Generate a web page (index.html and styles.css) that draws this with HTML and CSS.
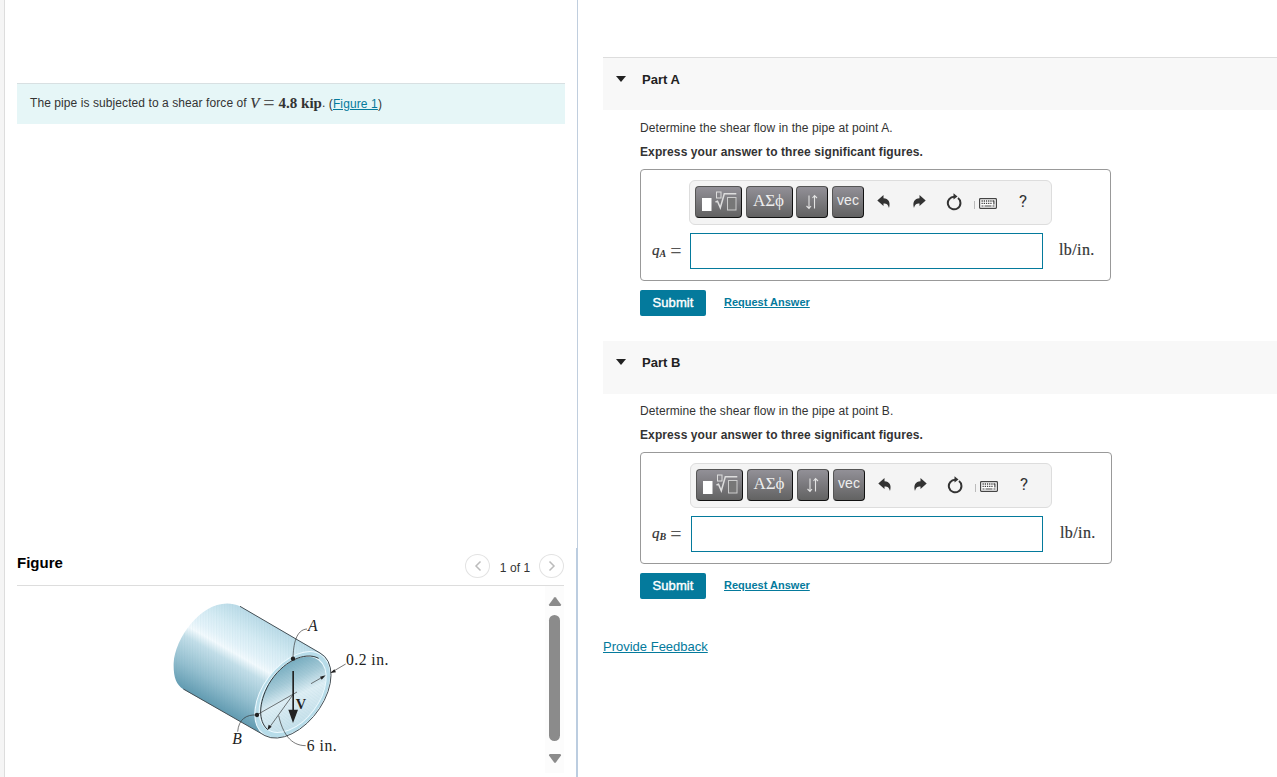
FILE: index.html
```
<!DOCTYPE html>
<html lang="en">
<head>
  <meta charset="UTF-8" />
  <meta name="viewport" content="width=device-width, initial-scale=1" />
  <title>Shear Flow in a Pipe</title>
  <link rel="stylesheet" href="styles.css">
</head>
<body>

  <!-- shared icons -->
  <svg class="defs" width="0" height="0">
    <symbol id="root" viewBox="0 0 36 22">
      <rect x="1" y="7" width="9.500" height="13" fill="#fff" />
      <rect x="15.500" y="1" width="4.500" height="6" fill="none" stroke="#ddd" />
      <path d="M14.500 11l2-.8 2.800 6.500 4-14h12" fill="none" stroke="#ddd" stroke-width="1.500" />
      <rect x="26.500" y="6.500" width="8.500" height="12.500" fill="#777" stroke="#ccc" />
    </symbol>
    <symbol id="updown" viewBox="0 0 14 16">
      <path d="M4 1.500v13M1.500 12L4 14.500 6 12M9.500 14.500v-13M7.500 4l2-2.500L12 4" fill="none" stroke="#e4e4e4" stroke-width="1.100" />
    </symbol>
    <symbol id="undo" viewBox="0 0 14 14">
      <path d="M6.500 0v3.300c5 .2 7.300 4 5.500 9.700-.8-3.400-2-4.600-5.500-4.600V11L.3 5.500z" fill="#333" />
    </symbol>
    <symbol id="reset" viewBox="0 0 16 18">
      <path d="M12 5A6.300 6.300 0 1 1 8.500 3.700" fill="none" stroke="#333" stroke-width="2" />
      <path d="M7.500 .3L11.500 3.600 7.500 6.500z" fill="#333" />
    </symbol>
    <symbol id="keyboard" viewBox="0 0 18 11">
      <rect x=".6" y=".6" width="16.800" height="9.800" rx=".8" fill="#fff" stroke="#444" stroke-width="1.200" />
      <path d="M2.500 3h13M2.500 5.400h11" stroke="#444" stroke-width="1.300" stroke-dasharray="1.300 .9" />
      <path d="M2.500 8h2M5.500 8h7M13.500 8h2M14.900 2.500v4" stroke="#444" stroke-width="1.200" />
    </symbol>
  </svg>

  <div class="page">
    <div class="left-panel">
      <div class="problem">
        The pipe is subjected to a shear force of <span class="math"><i>V</i><span class="eq">=</span><b>4.8 kip</b></span>. <span class="ref">(<a href="#figure">Figure 1</a>)</span>
      </div>

      <div class="figure-head" id="figure">
        <h2>Figure</h2>
        <div class="pager">
          <button class="round"><svg width="8" height="12" viewBox="0 0 8 12"><path d="M6.500 1.500L2 6l4.500 4.500" /></svg></button>
          <span>1 of 1</span>
          <button class="round"><svg width="8" height="12" viewBox="0 0 8 12"><path d="M1.500 1.500L6 6l-4.500 4.500" /></svg></button>
        </div>
      </div>

      <div class="figure-body">
        <svg class="pipe" width="240" height="170" viewBox="0 0 720 510">
          <defs>
            <linearGradient id="outer" gradientUnits="userSpaceOnUse" x1="238" y1="37" x2="92" y2="292">
              <stop offset="0" stop-color="#bcdce8" />
              <stop offset=".2" stop-color="#d6ecf4" />
              <stop offset=".35" stop-color="#e6f4fa" />
              <stop offset=".43" stop-color="#f4fbfe" />
              <stop offset=".53" stop-color="#c4dfe9" />
              <stop offset=".78" stop-color="#94bfcf" />
              <stop offset="1" stop-color="#639cb2" />
            </linearGradient>
            <linearGradient id="inner" gradientUnits="userSpaceOnUse" x1="470" y1="200" x2="370" y2="390">
              <stop offset="0" stop-color="#5f9db3" />
              <stop offset=".38" stop-color="#a5cad7" />
              <stop offset=".6" stop-color="#dfeff5" />
              <stop offset="1" stop-color="#c5e0ea" />
            </linearGradient>
            <pattern id="lines" width="8" height="8" patternUnits="userSpaceOnUse">
              <path d="M2 0v8" stroke="#4c8da6" stroke-width="2" opacity=".1" />
            </pattern>
          </defs>
          <path d="M240 34L480 173A148 90 -53 0 1 314 421L70 283C48 268 40 246 41 205C46 118 146 -8 240 34Z" fill="url(#outer)" />
          <path d="M240 34L480 173A148 90 -53 0 1 314 421L70 283C48 268 40 246 41 205C46 118 146 -8 240 34Z" fill="url(#lines)" />
          <ellipse cx="398" cy="299" rx="147" ry="89" transform="rotate(-53 398 299)" fill="#b7dce9" stroke="#eefaff" stroke-width="3" />
          <path d="M240 34L480 174A148 90 -53 0 1 315 422L70 282" fill="none" stroke="#454f55" stroke-width="3" />
          <ellipse cx="398" cy="298" rx="130" ry="79" transform="rotate(-53 398 298)" fill="url(#inner)" stroke="#eefaff" stroke-width="3" />
          <ellipse cx="398" cy="298" rx="130" ry="79" transform="rotate(-53 398 298)" fill="url(#lines)" />
          <path d="M323 404C294 378 295 326 326 268C366 199 435 168 476 190" fill="none" stroke="#30383c" stroke-width="3" />
          <g fill="none" stroke="#333" stroke-width="2">
            <path d="M441 102C408 104 400 148 399 190" />
            <path d="M233 410C236 372 260 358 290 360" />
            <path d="M290 360L411 291M399 299L325 402" />
            <path d="M356 362C368 415 392 452 437 452" />
            <path d="M453 266L490 245M513 233L557 207" />
          </g>
          <g fill="#222">
            <path d="M497 241L485 254 480 245zM511 234L523 223 528 232zM322 406L326 389 335 395z" />
            <circle cx="399" cy="191" r="6.500" />
            <circle cx="291" cy="360" r="6.500" />
            <path d="M397 228h5v116h12L399 384 385 344h12z" />
          </g>
          <g class="pipe-text">
            <text x="444" y="108" class="it">A</text>
            <text x="217" y="446" class="it">B</text>
            <text x="407" y="341" class="bd">V</text>
            <text x="558" y="211" textLength="127">0.2 in.</text>
            <text x="440" y="467" textLength="90">6 in.</text>
          </g>
        </svg>
        <div class="scrollbar">
          <svg width="14" height="11" viewBox="0 0 14 11"><path d="M6.200 1.500Q7 .6 7.800 1.500L13 8.500Q13.300 10 12 10H2Q.7 10 1 8.500z" /></svg>
          <div class="thumb"></div>
          <svg width="14" height="11" viewBox="0 0 14 11"><path d="M6.200 9.500Q7 10.400 7.800 9.500L13 2.500Q13.300 1 12 1H2Q.7 1 1 2.500z" /></svg>
        </div>
      </div>
    </div>

    <div class="divider"></div>

    <div class="right-panel">
      <section class="part part-a">
        <div class="part-head"><span class="caret"></span><h3>Part A</h3></div>
        <div class="part-body">
          <p>Determine the shear flow in the pipe at point A.</p>
          <p class="strong">Express your answer to three significant figures.</p>
          <div class="answer">
            <label class="math"><i>q</i><sub>A</sub><span class="eq">=</span></label>
            <div class="entry">
              <div class="toolbar">
                <button class="key wide"><svg width="36" height="22"><use href="#root" /></svg></button>
                <button class="key wide greek">ΑΣϕ</button>
                <button class="key"><svg width="14" height="16"><use href="#updown" /></svg></button>
                <button class="key vec">vec</button>
                <svg class="undo" width="14" height="14"><use href="#undo" /></svg>
                <svg class="redo" width="14" height="14"><use href="#undo" /></svg>
                <svg class="reset" width="16" height="18"><use href="#reset" /></svg>
                <span class="bar"></span>
                <svg class="keyboard" width="18" height="11"><use href="#keyboard" /></svg>
                <span class="help">?</span>
              </div>
              <input type="text">
            </div>
            <span class="math unit">lb/in.</span>
          </div>
          <div class="actions"><button class="submit">Submit</button><a href="#">Request Answer</a></div>
        </div>
      </section>

      <section class="part part-b">
        <div class="part-head"><span class="caret"></span><h3>Part B</h3></div>
        <div class="part-body">
          <p>Determine the shear flow in the pipe at point B.</p>
          <p class="strong">Express your answer to three significant figures.</p>
          <div class="answer">
            <label class="math"><i>q</i><sub>B</sub><span class="eq">=</span></label>
            <div class="entry">
              <div class="toolbar">
                <button class="key wide"><svg width="36" height="22"><use href="#root" /></svg></button>
                <button class="key wide greek">ΑΣϕ</button>
                <button class="key"><svg width="14" height="16"><use href="#updown" /></svg></button>
                <button class="key vec">vec</button>
                <svg class="undo" width="14" height="14"><use href="#undo" /></svg>
                <svg class="redo" width="14" height="14"><use href="#undo" /></svg>
                <svg class="reset" width="16" height="18"><use href="#reset" /></svg>
                <span class="bar"></span>
                <svg class="keyboard" width="18" height="11"><use href="#keyboard" /></svg>
                <span class="help">?</span>
              </div>
              <input type="text">
            </div>
            <span class="math unit">lb/in.</span>
          </div>
          <div class="actions"><button class="submit">Submit</button><a href="#">Request Answer</a></div>
        </div>
      </section>

      <a class="feedback" href="#">Provide Feedback</a>
    </div>
  </div>

</body>
</html>
```
FILE: styles.css
```
* { box-sizing: border-box; }
body { margin: 0; font-family: "Liberation Sans", Arial, sans-serif; font-size: 12px; color: #333; background: #fff; overflow: hidden; }
h2, h3, p { margin: 0; }
a { color: #047a9c; }
button { font-family: inherit; padding: 0; }
svg { display: block; flex: none; }
.defs { position: absolute; }

.page { display: flex; height: 777px; background: linear-gradient(to right, #f5f5f5 4px, #fff 4px); }
.left-panel { width: 572px; margin-left: 4px; border-left: 1px solid #ddd; padding: 83px 11px 0 12px; display: flex; flex-direction: column; }
.problem { height: 41px; background: #e6f6f7; border-top: 1px solid #d8e0e2; padding-left: 13px; line-height: 39px; white-space: nowrap; letter-spacing: .08px; }
.problem .ref { display: inline-block; line-height: 1; vertical-align: -1px; letter-spacing: .12px; }
.math { font-family: "Liberation Serif", "Times New Roman", serif; font-size: 15px; line-height: 1; letter-spacing: 0; -webkit-text-stroke: .2px #333; }
.math .eq { margin: 0 4px 0 4px; font-size: 20px; line-height: 0; vertical-align: -2px; color: #555; -webkit-text-stroke: 0; }
.problem .math { vertical-align: -1px; }
.problem .math b { -webkit-text-stroke: 0; }

.figure-head { display: flex; justify-content: space-between; margin: 424px 1px 0 0; height: 38px; border-bottom: 1px solid #ddd; }
.figure-head h2 { font-size: 15px; line-height: 30px; color: #000; }
.pager { display: flex; align-items: flex-start; padding-top: 6px; }
.pager span { width: 49px; text-align: center; line-height: 26px; padding: 1px 0 0 1px; letter-spacing: .1px; }
.round { width: 25px; height: 24px; border: 1px solid #e3e3e3; border-radius: 50%; background: #fff; display: flex; align-items: center; justify-content: center; }
.round path { fill: none; stroke: #bbb; stroke-width: 1.5; }
.figure-body { display: flex; justify-content: space-between; height: 191px; }
.pipe { margin: 9px 0 0 143px; }
.pipe-text text { font-family: "Liberation Serif", serif; font-size: 47px; fill: #222; }
.pipe-text .it { font-style: italic; }
.pipe-text .bd { font-weight: bold; font-size: 43px; }
.scrollbar { width: 19px; height: 187px; background: #fcfcfc; display: flex; flex-direction: column; align-items: center; padding-top: 10px; margin-right: 1px; }
.scrollbar path { fill: #8b8b8b; }
.thumb { width: 11px; height: 126px; margin: 8px 0 12px; border-radius: 6px; background: #8b8b8b; }

.divider { width: 2px; height: 777px; background: linear-gradient(to right, transparent 1px, #c0cede 1px) 0 0 / 2px 548px no-repeat, linear-gradient(#bccde0, #bccde0) 0 548px / 2px 229px no-repeat; }

.right-panel { width: 699px; padding: 57px 0 0 25px; }
.part { height: 283px; }
.part-head { height: 53px; background: #f8f8f8; border-top: 1px solid #ddd; display: flex; padding-left: 12px; }
.part-b .part-head { border-top-color: #fff; height: 54px; }
.part-head h3 { font-size: 13px; line-height: 43px; color: #222; font-weight: bold; letter-spacing: 0; }
.caret { width: 0; height: 0; border: 5.5px solid transparent; border-top: 6px solid #222; border-bottom: 0; margin: 18px 16px 0 1px; }
.part-body { padding: 9px 0 0 37px; }
.part-b .part-body { padding-top: 8px; }
.part-body p { height: 24px; line-height: 18px; letter-spacing: .08px; }
.part-body .strong { font-weight: bold; height: 26px; letter-spacing: .1px; }
.answer { width: 471px; height: 112px; border: 1px solid #999; border-radius: 4px; display: flex; }
.part-b .answer { width: 472px; }
.answer label { width: 49px; padding: 73px 0 0 11px; white-space: nowrap; }
.part-b .answer label { width: 50px; }
.answer sub { font-size: 10px; font-style: italic; font-weight: bold; vertical-align: -2px; line-height: 0; -webkit-text-stroke: 0; }
.answer .eq { margin: 0 0 0 4px; vertical-align: -3px; }
.entry { width: 362px; padding-top: 10px; }
.part-b .entry { width: 361px; }
.toolbar { height: 45px; margin-left: -1px; border: 1px solid #ddd; border-radius: 6px; background: #f4f4f4; display: flex; align-items: center; padding-left: 5px; }
.key { width: 32px; height: 32px; margin: 0 4px 1px 0; border: 1px solid #111; border-top-color: #555; border-left-color: #555; border-radius: 4px; background: linear-gradient(#929097, #626262); color: #eee; display: flex; align-items: center; justify-content: center; }
.wide { width: 47px; }
.greek { font-family: "Liberation Serif", serif; font-size: 17px; margin-right: 3px; padding: 0 2px 2px 0; }
.part-b .greek { width: 46px; margin-right: 4px; }
.vec { font-size: 14px; padding-bottom: 5px; }
.undo { margin: 0 0 2px 9px; }
.redo { margin: 0 0 2px 21px; transform: scaleX(-1); }
.reset { margin: 0 0 2px 20px; }
.bar { width: 1px; height: 8px; background: #bbb; margin: 4px 4px 0 12px; }
.keyboard { margin-top: 2px; }
.help { font-family: Roboto, sans-serif; font-size: 17px; margin: 0 0 3px 22px; }
.entry input { display: block; width: 353px; height: 36px; margin-top: 8px; border: 1px solid #047a9c; background: #fff; outline: 0; }
.part-b .entry input { width: 352px; }
.unit { padding: 72px 0 0 7px; letter-spacing: .4px; font-size: 16px; }
.part-b .unit { padding-left: 8px; }
.actions { display: flex; align-items: center; margin-top: 9px; height: 26px; font-size: 11px; font-weight: bold; }
.submit { width: 66px; height: 26px; margin-right: 18px; padding-bottom: 2px; border: 0; border-radius: 2px; background: #047a9c; color: #fff; font-size: 13px; -webkit-text-stroke: .4px #fff; letter-spacing: .1px; }
.actions a { margin-bottom: 2px; }
.feedback { display: block; margin-top: 15px; font-size: 13px; line-height: 18px; }
```
